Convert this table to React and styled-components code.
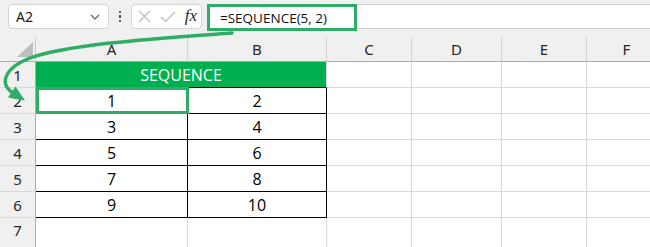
import React from 'react';
import styled, { createGlobalStyle, css } from 'styled-components';

const GREEN_FILL = '#00b050';
const MARK = '#2fad66';
const GRID = '#dadada';
const HEAD_BG = '#f0f0f0';
const HEAD_LINE = '#ababab';

const GlobalStyle = createGlobalStyle`
    html, body
    {
        margin: 0;
        padding: 0;
        background: ${HEAD_BG};
        overflow: hidden;
    }

    #root
    {
        width: 650px;
        height: 247px;
        overflow: hidden;
    }
`;

const columns = ['A', 'B', 'C', 'D', 'E', 'F'];

// 5 x 2 output of the formula, row by row
const values = [[1, 2], [3, 4], [5, 6], [7, 8], [9, 10]];

const App = () =>
{
    const rows = [];

    for(let r = 1; r <= 7; r++)
    {
        const cells = [];

        if(r === 1)
        {
            cells.push(<Title key="title">SEQUENCE</Title>);
        }
        else if(r <= 6)
        {
            values[r - 2].forEach((v, i) => (
                cells.push(
                    <Cell key={i} boxed selected={r === 2 && i === 0}>{v}</Cell>
                )
            ));
        }
        else
        {
            cells.push(<Cell key="a" last />, <Cell key="b" last />);
        }

        for(let c = 2; c < columns.length; c++)
        {
            cells.push(<Cell key={columns[c]} last={r === 7} />);
        }

        rows.push(
            <React.Fragment key={r}>
                <RowHead last={r === 7}>{r}</RowHead>
                {cells}
            </React.Fragment>
        );
    }

    return (
        <>
            <GlobalStyle />
            <Page>
                <TopBar>
                    <NameBox>
                        <span>A2</span>
                        <svg width="10" height="6" viewBox="0 0 10 6">
                            <polyline points="1,1 5,5 9,1" fill="none" stroke="#5a5a5a" strokeWidth="1.1" />
                        </svg>
                    </NameBox>
                    <Dots>
                        <i /><i /><i />
                    </Dots>
                    <ActionBox>
                        <svg width="13" height="13" viewBox="0 0 13 13">
                            <path d="M1 1 L12 12 M12 1 L1 12" stroke="#bdbdbd" strokeWidth="1.2" fill="none" />
                        </svg>
                        <svg width="16" height="12" viewBox="0 0 16 12">
                            <polyline points="1,6 5.5,10.5 15,1" stroke="#bdbdbd" strokeWidth="1.2" fill="none" />
                        </svg>
                        <Fx>fx</Fx>
                    </ActionBox>
                    <FormulaBar>
                        <Formula>=SEQUENCE(5, 2)</Formula>
                    </FormulaBar>
                </TopBar>

                <Sheet>
                    <Corner><Triangle /></Corner>
                    {columns.map((c) => <ColHead key={c}>{c}</ColHead>)}
                    {rows}
                </Sheet>

                <Arrow viewBox="0 0 650 247" width="650" height="247">
                    <path
                        d="M232 33 C150 39, 70 44, 30 58 C4 68, -1 84, 13 93"
                        fill="none"
                        stroke={MARK}
                        strokeWidth="3.4"
                        strokeLinecap="round"
                    />
                    <polygon points="25,100.5 8,97.5 15.5,86.5" fill={MARK} />
                </Arrow>
            </Page>
        </>
    );
};

const Page = styled.div`
    position: relative;
    width: 650px;
    height: 247px;
    display: flex;
    flex-direction: column;
    background: ${HEAD_BG};
    font-family: "Noto Sans", "Open Sans", sans-serif;
    color: #1f1f1f;
`;

const TopBar = styled.div`
    display: flex;
    align-items: flex-start;
    height: 37px;
    flex-shrink: 0;
    box-sizing: border-box;
    padding: 4px 0 0 8px;
`;

const boxFrame = css`
    height: 25px;
    box-sizing: border-box;
    background: #fff;
    border: 1px solid #d4d4d4;
    border-radius: 4px;
    display: flex;
    align-items: center;
`;

const NameBox = styled.div`
    ${boxFrame};
    width: 101px;
    justify-content: space-between;
    padding: 0 8px 0 7px;
    font-size: 14px;
    color: #1a1a1a;
`;

const Dots = styled.div`
    width: 22px;
    height: 25px;
    display: flex;
    flex-direction: column;
    align-items: center;
    justify-content: center;
    gap: 2px;

    i
    {
        width: 2.5px;
        height: 2.5px;
        border-radius: 50%;
        background: #333;
    }
`;

const ActionBox = styled.div`
    ${boxFrame};
    width: 71px;
    padding: 0 4px 0 6px;
    justify-content: space-between;
`;

const Fx = styled.span`
    font-family: "Liberation Serif", "DejaVu Serif", serif;
    font-style: italic;
    font-size: 17px;
    color: #2a2a2a;
    line-height: 1;
    margin-top: -2px;
`;

const FormulaBar = styled.div`
    flex: 1;
    height: 25px;
    margin-left: 5px;
    background: #fff;
    border-top: 1px solid #d0d0d0;
    border-bottom: 1px solid #d0d0d0;
    box-sizing: border-box;
`;

const Formula = styled.div`
    width: 150px;
    height: 27px;
    margin-top: -1px;
    box-sizing: border-box;
    border: 3px solid ${MARK};
    padding-left: 10px;
    display: flex;
    align-items: center;
    font-family: "Open Sans", sans-serif;
    font-size: 13.5px;
    color: #111;
`;

const Sheet = styled.div`
    flex: 1;
    display: grid;
    grid-template-columns: 36px 152px 139px 85px 90px 85px 80px;
    grid-template-rows: 25px repeat(6, 26px) 1fr;
    background: #fff;
`;

const headCell = css`
    background: ${HEAD_BG};
    display: flex;
    align-items: center;
    justify-content: center;
    box-sizing: border-box;
    font-size: 15px;
    color: #262626;
`;

const Corner = styled.div`
    ${headCell};
    border-right: 1px solid #c8c8c8;
    border-bottom: 1px solid ${HEAD_LINE};
    align-items: flex-end;
    justify-content: flex-end;
    padding: 0 2px 4px 0;
`;

const Triangle = styled.div`
    width: 0;
    height: 0;
    border-left: 16px solid transparent;
    border-bottom: 15px solid #bdbdbd;
`;

const ColHead = styled.div`
    ${headCell};
    border-right: 1px solid #d2d2d2;
    border-bottom: 1px solid ${HEAD_LINE};
`;

const RowHead = styled.div`
    ${headCell};
    border-right: 1px solid ${HEAD_LINE};
    border-bottom: ${(p) => (p.last ? 'none' : '1px solid #d8d8d8')};
    align-items: ${(p) => (p.last ? 'flex-start' : 'center')};
    padding-top: ${(p) => (p.last ? '2px' : '0')};
`;

const Cell = styled.div`
    position: relative;
    box-sizing: border-box;
    display: flex;
    align-items: center;
    justify-content: center;
    border-right: 1px solid ${(p) => (p.boxed ? '#000' : GRID)};
    border-bottom: ${(p) => (p.last ? 'none' : `1px solid ${p.boxed ? '#000' : GRID}`)};
    font-family: "Open Sans", sans-serif;
    font-size: 16px;
    color: #000;

    ${(p) => p.selected && css`
        &::after
        {
            content: "";
            position: absolute;
            top: -1px;
            left: 0;
            right: -2px;
            bottom: -1px;
            border: 3px solid ${MARK};
            z-index: 1;
        }
    `}
`;

const Title = styled.div`
    grid-column: span 2;
    background: ${GREEN_FILL};
    color: #fff;
    box-sizing: border-box;
    display: flex;
    align-items: center;
    justify-content: center;
    border-right: 1px solid ${GRID};
    border-bottom: 1px solid #000;
    font-family: "Open Sans", sans-serif;
    font-size: 16px;
`;

const Arrow = styled.svg`
    position: absolute;
    left: 0;
    top: 0;
    pointer-events: none;
    overflow: visible;
    z-index: 2;
`;

export default App;
